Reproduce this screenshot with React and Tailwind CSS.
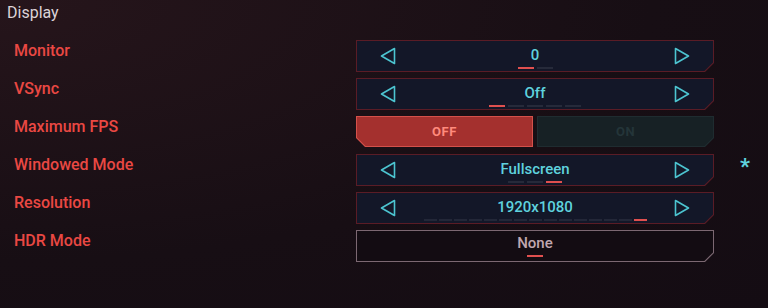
import React from 'react';

const clipBR = '[clip-path:polygon(0_0,100%_0,100%_calc(100%_-_9px),calc(100%_-_9px)_100%,0_100%)]';
const clipBRin = '[clip-path:polygon(0_0,100%_0,100%_calc(100%_-_8.6px),calc(100%_-_8.6px)_100%,0_100%)]';
const clipBL = '[clip-path:polygon(0_0,100%_0,100%_100%,9px_100%,0_calc(100%_-_9px))]';
const clipBLin = '[clip-path:polygon(0_0,100%_0,100%_100%,8.6px_100%,0_calc(100%_-_8.6px))]';

// 좌/우 화살표
const Arrow = ({ dir }) => (
  <svg width="16" height="18" viewBox="0 0 16 18" fill="none">
    {dir === 'left' ? (
      <path d="M14.5 1.5 L1.5 9 L14.5 16.5 Z" stroke="#4cc4d0" strokeWidth="1.6" strokeLinejoin="round" />
    ) : (
      <path d="M1.5 1.5 L14.5 9 L1.5 16.5 Z" stroke="#4cc4d0" strokeWidth="1.6" strokeLinejoin="round" />
    )}
  </svg>
);

const Dashes = ({ count, active }) => (
  <div className="flex gap-[3px] mt-[3px]">
    {Array.from({ length: count }).map((_, i) => (
      <div key={i} className={`w-[16px] h-[2px] ${i === active ? 'bg-[#e0504f]' : 'bg-[#262a3a]'}`} />
    ))}
  </div>
);

const SelectBox = ({ value, count, active, small }) => (
  <div className={`w-[358px] h-[32px] p-px bg-[#5a1c26] ${clipBR}`}>
    <div className={`h-full w-full bg-[#131728] ${clipBRin} flex items-center justify-between px-[23px]`}>
      <Arrow dir="left" />
      <div className="flex flex-col items-center self-start pt-[5px]">
        <span className="text-[15px] leading-[18px] font-medium text-[#5fd2de]">{value}</span>
        {small ? (
          <div className="flex gap-[2px] mt-[3px]">
            {Array.from({ length: count }).map((_, i) => (
              <div key={i} className={`w-[13px] h-[2px] ${i === active ? 'bg-[#e0504f]' : 'bg-[#232738]'}`} />
            ))}
          </div>
        ) : (
          <Dashes count={count} active={active} />
        )}
      </div>
      <Arrow dir="right" />
    </div>
  </div>
);

const Toggle = () => (
  <div className="w-[358px] h-[31px] flex gap-[4px]">
    <div className={`flex-1 p-px bg-[#d4514b] ${clipBL}`}>
      <div className={`h-full w-full bg-[#a4302e] ${clipBLin} flex items-center justify-center`}>
        <span className="text-[13px] font-bold tracking-[0.04em] text-[#ff8a7c]">OFF</span>
      </div>
    </div>
    <div className={`flex-1 p-px bg-[#1f2c30] ${clipBR}`}>
      <div className={`h-full w-full bg-[#172125] ${clipBRin} flex items-center justify-center`}>
        <span className="text-[13px] font-bold tracking-[0.04em] text-[#243539]">ON</span>
      </div>
    </div>
  </div>
);

const PlainBox = ({ value }) => (
  <div className={`w-[358px] h-[32px] p-px bg-[#7c6872] ${clipBR}`}>
    <div className={`h-full w-full bg-[#130c12] ${clipBRin} flex flex-col items-center pt-[3px]`}>
      <span className="text-[15px] leading-[18px] font-medium text-[#c0a7b0]">{value}</span>
      <div className="w-[16px] h-[2px] bg-[#e0504f] mt-[3px]" />
    </div>
  </div>
);

const Row = ({ label, children, extra }) => (
  <div className="flex items-start h-[32px]">
    <div className="w-[356px] pl-[14px] pt-[1px] text-[16px] leading-5 font-medium text-[#ea4843]">{label}</div>
    {children}
    {extra}
  </div>
);

const App = () => {
  return (
    <div className="w-[768px] h-[308px] overflow-hidden bg-[radial-gradient(ellipse_at_top_left,#26151b,#170e14_60%,#140c13)] font-['Roboto','Liberation_Sans',sans-serif]">
      <div className="pt-[3px] pl-[7px] text-[16px] leading-5 text-[#dcd3d7]">Display</div>
      <div className="mt-[17px] flex flex-col gap-[6px]">
        <Row label="Monitor">
          <SelectBox value="0" count={2} active={0} />
        </Row>
        <Row label="VSync">
          <SelectBox value="Off" count={5} active={0} />
        </Row>
        <Row label="Maximum FPS">
          <Toggle />
        </Row>
        <Row
          label="Windowed Mode"
          extra={<span className="ml-[26px] mt-[3px] text-[22px] leading-5 font-bold text-[#5fd2de]">*</span>}
        >
          <SelectBox value="Fullscreen" count={3} active={2} />
        </Row>
        <Row label="Resolution">
          <SelectBox value="1920x1080" count={15} active={14} small />
        </Row>
        <Row label="HDR Mode">
          <PlainBox value="None" />
        </Row>
      </div>
    </div>
  );
};

export default App;
